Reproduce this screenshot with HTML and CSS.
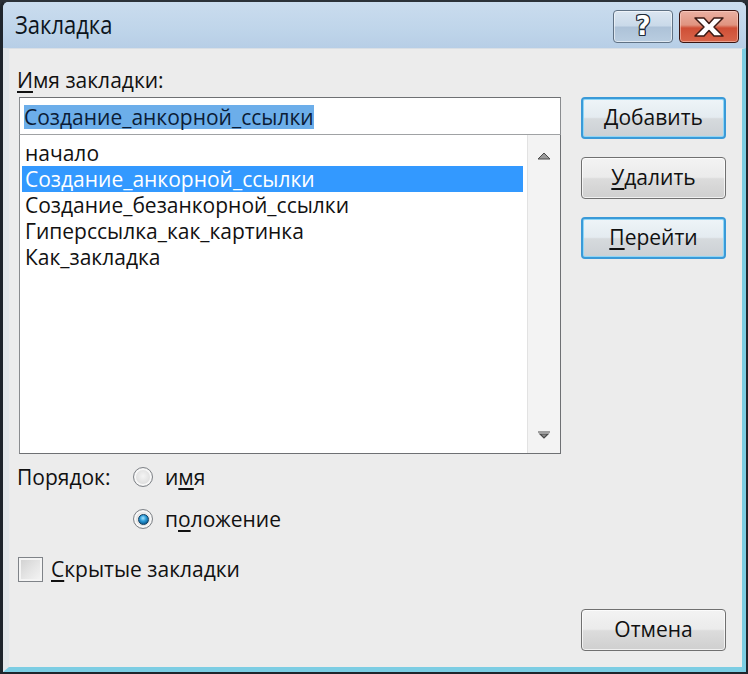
FILE: index.html
```html
<!DOCTYPE html>
<html lang="ru">
<head>
<meta charset="utf-8">
<title>Закладка</title>
<link rel="stylesheet" href="styles.css">
</head>
<body>
<div class="window">
  <div class="titlebar">
    <span class="title">Закладка</span>
    <div class="caption-btns">
      <div class="cap-btn help"><span class="help-glyph">?</span></div>
      <div class="cap-btn close">
        <svg width="34" height="22" viewBox="0 0 34 22">
          <path d="M3 2 H12 L17 7.5 L22 2 H31 L22 11 L31 20 H22 L17 14.5 L12 20 H3 L12 11 Z" fill="#ffffff" stroke="#3b1a14" stroke-width="1.5" stroke-linejoin="round"/>
        </svg>
      </div>
    </div>
  </div>
  <div class="client">
    <div class="left">
      <div class="label"><u>И</u>мя закладки:</div>
      <div class="edit"><span class="sel">Создание_анкорной_ссылки</span></div>
      <div class="list">
        <ul class="items">
          <li>начало</li>
          <li class="selected">Создание_анкорной_ссылки</li>
          <li>Создание_безанкорной_ссылки</li>
          <li>Гиперссылка_как_картинка</li>
          <li>Как_закладка</li>
        </ul>
        <div class="scroll">
          <svg class="arrow" width="14" height="8" viewBox="0 0 14 8"><path d="M7 1 L13 7 H1 Z" fill="#9a9a9a" stroke="#4a4a4a" stroke-width="1"/></svg>
          <svg class="arrow" width="14" height="8" viewBox="0 0 14 8"><path d="M1 1 H13 M3 3 H11 L7 7 Z" fill="#8a8a8a" stroke="#4a4a4a" stroke-width="1.2"/></svg>
        </div>
      </div>
      <div class="order-row">
        <span class="order-label">Порядок:</span>
        <span class="radio"></span>
        <span class="opt">и<u>м</u>я</span>
      </div>
      <div class="order-row second">
        <span class="radio checked"><span class="dot"></span></span>
        <span class="opt">п<u>о</u>ложение</span>
      </div>
      <div class="check-row">
        <span class="checkbox"></span>
        <span class="opt"><u>С</u>крытые закладки</span>
      </div>
    </div>
    <div class="right">
      <div class="btn default"><u>Д</u>обавить</div>
      <div class="btn"><u>У</u>далить</div>
      <div class="btn default"><u>П</u>ерейти</div>
      <div class="btn cancel">Отмена</div>
    </div>
  </div>
</div>
</body>
</html>
```
FILE: styles.css
```css
* { box-sizing: border-box; }
html, body { margin: 0; padding: 0; }
body {
  width: 748px;
  height: 674px;
  overflow: hidden;
  font-family: "Open Sans", "Noto Sans", sans-serif;
  font-size: 21px;
  color: #111;
  background: #2a2f36;
}
u { text-decoration: underline; text-underline-offset: 3px; text-decoration-thickness: 1.5px; }

.window {
  width: 748px;
  height: 674px;
  border-left: 3px solid #1f252c;
  border-top: 2px solid #2b3138;
  border-right: 2px solid #1f252c;
  border-bottom: 2px solid #1f252c;
  border-radius: 8px 8px 0 0;
  background: linear-gradient(#c9dcee, #b9cfe5);
  display: flex;
  flex-direction: column;
  overflow: hidden;
}

.titlebar {
  height: 46px;
  flex: none;
  display: flex;
  align-items: center;
  padding-left: 12px;
  padding-right: 7px;
  background: linear-gradient(#cadcee 0%, #bfd5ea 60%, #b7cee6 100%);
}
.title {
  font-size: 22px;
  color: #0c141c;
  flex: 1;
  padding-bottom: 2px;
  transform: scaleY(1.12);
  transform-origin: left center;
}
.caption-btns {
  display: flex;
  gap: 6px;
  align-self: flex-start;
  margin-top: 8px;
}
.cap-btn {
  width: 60px;
  height: 33px;
  border-radius: 4px;
  display: flex;
  align-items: center;
  justify-content: center;
}
.help {
  border: 1px solid #5f7184;
  background: linear-gradient(#dbe6f1 0%, #c9d9e9 48%, #adc2d8 52%, #b9cde0 100%);
  box-shadow: inset 0 0 0 1px rgba(255,255,255,0.55);
}
.help-glyph {
  font-family: "DejaVu Sans", sans-serif;
  font-weight: bold;
  font-size: 26px;
  color: #ffffff;
  text-shadow: 1px 0 0 #1f2b38, -1px 0 0 #1f2b38, 0 1px 0 #1f2b38, 0 -1px 0 #1f2b38,
               1px 1px 0 #1f2b38, -1px -1px 0 #1f2b38, 1px -1px 0 #1f2b38, -1px 1px 0 #1f2b38;
  line-height: 1;
  margin-top: -1px;
}
.close {
  border: 1px solid #3a1410;
  background: linear-gradient(#eab0a2 0%, #e09480 45%, #cf4f36 55%, #d8654a 100%);
  box-shadow: inset 0 0 0 1px rgba(255,220,210,0.5);
}

.client {
  flex: 1;
  display: flex;
  gap: 20px;
  background: #ececec;
  border-top: 1px solid #d9dfe5;
  border-left: 6px solid #e3e7ea;
  border-right: 4px solid #7ccde3;
  border-bottom: 5px solid #7ccde3;
  padding: 19px 16px 16px 8px;
}

.left {
  width: 544px;
  display: flex;
  flex-direction: column;
}
.label {
  height: 24px;
  line-height: 24px;
}
.edit {
  margin-top: 5px;
  margin-left: 2px;
  height: 38px;
  background: #fff;
  border: 1px solid #8a8c8f;
  border-top-color: #6e7073;
  border-bottom-color: #a0a2a4;
  padding: 5px 0 0 4px;
}
.sel {
  display: inline-block;
  height: 24px;
  line-height: 24px;
  background: #6caeea;
  color: #0b1c36;
}
.list {
  margin-left: 2px;
  height: 319px;
  background: #fff;
  border: 1px solid #8a8c8f;
  border-top: none;
  border-bottom-color: #6e7073;
  border-right-color: #6e7073;
  display: flex;
}
.items {
  list-style: none;
  margin: 0;
  padding: 5px 4px 0 2px;
  flex: 1;
}
.items li {
  height: 26px;
  line-height: 26px;
  padding-left: 3px;
  white-space: nowrap;
}
.items li.selected {
  background: #3399ff;
  color: #fff;
}
.scroll {
  width: 33px;
  background: #f3f3f3;
  border-left: 1px solid #e2e2e2;
  display: flex;
  flex-direction: column;
  align-items: center;
  justify-content: space-between;
  padding: 17px 0 14px;
}

.order-row {
  display: flex;
  align-items: center;
  height: 26px;
  margin-top: 10px;
}
.order-row.second {
  margin-top: 16px;
  padding-left: 116px;
}
.order-label {
  width: 116px;
}
.radio {
  width: 20px;
  height: 20px;
  border-radius: 50%;
  border: 1px solid #7f8388;
  background: radial-gradient(circle at 50% 45%, #f4f4f4 0%, #e2e2e2 50%, #c9c9c9 100%);
  box-shadow: inset 0 0 0 2px #f7f7f7;
  display: flex;
  align-items: center;
  justify-content: center;
  flex: none;
}
.dot {
  width: 11px;
  height: 11px;
  border-radius: 50%;
  background: radial-gradient(circle at 45% 35%, #a8e6ff 0%, #2a9ad8 40%, #0c5c92 80%, #0a3f68 100%);
  border: 1px solid #0d3d60;
}
.opt {
  margin-left: 12px;
}
.check-row {
  display: flex;
  align-items: center;
  height: 26px;
  margin-top: 24px;
  padding-left: 1px;
}
.checkbox {
  width: 25px;
  height: 25px;
  border: 1px solid #7f8388;
  background: linear-gradient(135deg, #cfcfcf 0%, #e4e4e4 50%, #f6f6f6 100%);
  box-shadow: inset 0 0 0 2px #f4f4f4;
  flex: none;
}
.check-row .opt { margin-left: 8px; }

.right {
  width: 145px;
  display: flex;
  flex-direction: column;
  gap: 18px;
  padding-top: 29px;
}
.btn {
  height: 42px;
  border: 1px solid #707070;
  border-radius: 4px;
  background: linear-gradient(#f3f3f3 0%, #ebebeb 48%, #dcdcdc 52%, #cfcfcf 100%);
  box-shadow: inset 0 0 0 1px rgba(255,255,255,0.7);
  display: flex;
  align-items: center;
  justify-content: center;
  padding-bottom: 2px;
}
.btn.default {
  border: 2px solid #3a9ad8;
  box-shadow: inset 0 0 0 1px #8fd6f6;
  background: linear-gradient(#eef4f8 0%, #e4ebf0 48%, #d6dadd 52%, #cbd0d4 100%);
}
.btn.cancel {
  margin-top: auto;
}
```
